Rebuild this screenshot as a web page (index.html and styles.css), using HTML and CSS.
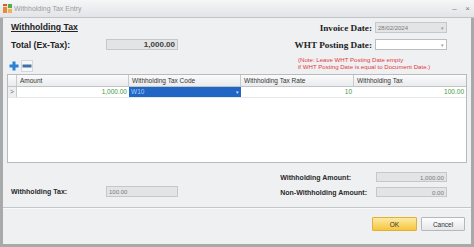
FILE: index.html
```html
<!DOCTYPE html>
<html lang="en">
<head>
  <meta charset="UTF-8">
  <title>Withholding Tax Entry</title>
  <link rel="stylesheet" href="styles.css">
</head>
<body>

  <div class="window">
    <!-- Title bar -->
    <div class="titlebar">
      <svg class="app-icon" viewBox="0 0 9 9">
        <rect x="0" y="0" width="9" height="9" fill="#f3e2c4"/>
        <rect x="0" y="3" width="4" height="6" fill="#e58a3a"/>
        <rect x="5" y="0" width="4" height="4" fill="#4cae4c"/>
        <rect x="5" y="5" width="4" height="4" fill="#f0b35a"/>
        <rect x="0" y="0" width="4" height="2" fill="#d9573a"/>
      </svg>
      <span class="title">Withholding Tax Entry</span>
      <span class="win-ctrl">&ndash;</span>
      <span class="win-ctrl">&times;</span>
    </div>

    <div class="frame">
      <div class="content">
        <div class="top">
          <div class="top-left">
            <div class="heading">Withholding Tax</div>
            <div class="field-row total-row">
              <span class="label-bold">Total (Ex-Tax):</span>
              <div class="box box-total">1,000.00</div>
            </div>
            <div class="toolbar">
              <button class="tool-btn">
                <svg viewBox="0 0 10 10" width="10" height="10">
                  <rect x="3.5" y="0.5" width="3" height="9" fill="#2b82d4"/>
                  <rect x="0.5" y="3.5" width="9" height="3" fill="#2b82d4"/>
                </svg>
              </button>
              <button class="tool-btn tool-frame">
                <svg viewBox="0 0 10 10" width="10" height="10">
                  <rect x="0.5" y="3.5" width="9" height="3" fill="#4470a6"/>
                </svg>
              </button>
            </div>
          </div>

          <div class="top-right">
            <div class="date-row">
              <span class="label-serif">Invoice Date:</span>
              <div class="box box-date">28/02/2024<span class="arrow">&#9662;</span></div>
            </div>
            <div class="date-row">
              <span class="label-serif">WHT Posting Date:</span>
              <div class="box box-date box-white"><span></span><span class="arrow">&#9662;</span></div>
            </div>
            <div class="note">(Note: Leave WHT Posting Date empty<br>if WHT Posting Date is equal to Document Date.)</div>
          </div>
        </div>

        <!-- Grid -->
        <div class="grid">
          <div class="grid-row grid-head">
            <div class="cell"></div>
            <div class="cell">Amount</div>
            <div class="cell">Withholding Tax Code</div>
            <div class="cell">Withholding Tax Rate</div>
            <div class="cell">Withholding Tax</div>
          </div>
          <div class="grid-row grid-data">
            <div class="cell cell-indicator">&gt;</div>
            <div class="cell cell-num">1,000.00</div>
            <div class="cell cell-selected">W10<span class="arrow-light">&#9662;</span></div>
            <div class="cell cell-num">10</div>
            <div class="cell cell-num">100.00</div>
          </div>
        </div>

        <!-- Summary -->
        <div class="summary">
          <div class="field-row">
            <span class="label-small">Withholding Tax:</span>
            <div class="box box-left">100.00</div>
          </div>
          <div class="summary-right">
            <span class="label-small">Withholding Amount:</span>
            <div class="box box-sum">1,000.00</div>
            <span class="label-small">Non-Withholding Amount:</span>
            <div class="box box-sum">0.00</div>
          </div>
        </div>
      </div>

      <div class="separator"></div>

      <div class="footer">
        <button class="btn btn-ok">OK</button>
        <button class="btn btn-cancel">Cancel</button>
      </div>
    </div>
  </div>

</body>
</html>
```

FILE: styles.css
```css
body {
  margin: 0;
  font-family: "Liberation Sans", Arial, sans-serif;
  background: #eff0f2;
}

.window {
  width: 474px;
  height: 247px;
  display: flex;
  flex-direction: column;
  background: #eff0f2;
}

/* Title bar */
.titlebar {
  height: 17px;
  display: flex;
  align-items: center;
  padding-left: 3px;
  background: linear-gradient(#f5f6f8, #e3e4e7);
  border-bottom: 1px solid #c3c4c7;
}

.app-icon {
  width: 9px;
  height: 9px;
  margin-right: 2px;
}

.title {
  flex: 1;
  font-size: 7px;
  color: #9a9b9d;
}

.win-ctrl {
  width: 13px;
  text-align: center;
  font-size: 8px;
  color: #7a7a7a;
}

/* Window frame */
.frame {
  flex: 1;
  display: flex;
  flex-direction: column;
  border: 3px solid #a8a9ab;
  border-top: none;
}

.content {
  padding: 0 4px;
}

.top {
  display: flex;
  justify-content: space-between;
}

.top-left {
  padding: 3px 0 0 4px;
}

.heading {
  font-size: 8.7px;
  font-weight: bold;
  line-height: 12px;
  text-decoration: underline;
  color: #222;
}

.field-row {
  display: grid;
  grid-template-columns: 95px 72px;
  align-items: center;
}

.total-row {
  margin-top: 6px;
}

.label-bold {
  font-size: 8.7px;
  font-weight: bold;
  color: #222;
}

.label-small {
  font-size: 7px;
  font-weight: bold;
  color: #2a2a2a;
}

.box {
  height: 11px;
  box-sizing: border-box;
  display: flex;
  align-items: center;
  padding: 0 2px;
  border: 1px solid #c6c7c9;
  background: #e3e4e6;
  font-size: 6px;
  color: #7a7a7a;
}

.box-total {
  justify-content: flex-end;
  font-size: 8px;
  font-weight: bold;
  color: #3c3c3c;
}

/* +/- buttons */
.toolbar {
  display: flex;
  gap: 1px;
  margin: 10px 0 0 -3px;
}

.tool-btn {
  width: 12px;
  height: 12px;
  padding: 0;
  display: flex;
  align-items: center;
  justify-content: center;
  border: 1px solid transparent;
  background: none;
}

.tool-frame {
  border-color: #d3d6da;
  background: #f6f7f9;
}

.top-right {
  width: 175px;
  margin-right: 20px;
  padding-top: 4px;
}

.date-row {
  display: grid;
  grid-template-columns: 1fr 72px;
  column-gap: 3px;
  align-items: center;
}

.date-row + .date-row {
  margin-top: 6px;
}

.label-serif {
  font-family: "Liberation Serif", serif;
  font-size: 9.2px;
  font-weight: bold;
  text-align: right;
  white-space: nowrap;
  color: #222;
}

.box-date {
  justify-content: space-between;
}

.box-white {
  background: #fff;
  border-color: #bcbdbf;
}

.arrow {
  font-size: 5px;
  color: #9a9a9a;
}

.note {
  margin-top: 6px;
  padding-left: 26px;
  font-size: 6.1px;
  line-height: 7px;
  color: #e5383d;
  white-space: nowrap;
}

/* Grid */
.grid {
  margin-top: 2px;
  height: 89px;
  box-sizing: border-box;
  border: 1px solid #b9babc;
  background: #fff;
}

.grid-row {
  display: grid;
  grid-template-columns: 9px 112px 112px 113px 1fr;
}

.grid-head {
  height: 12px;
  box-sizing: border-box;
  border-bottom: 1px solid #c2c3c5;
  background: linear-gradient(#fbfbfc, #eaebed);
}

.grid-head .cell {
  border-right: 1px solid #c9cacc;
  padding-left: 3px;
  font-size: 6.5px;
  line-height: 11px;
  color: #333;
}

.grid-head .cell:last-child {
  border-right: none;
}

.grid-data {
  height: 11px;
  box-sizing: border-box;
  border-bottom: 1px solid #e6e7e9;
}

.grid-data .cell {
  font-size: 6.5px;
  line-height: 10px;
}

.cell-indicator {
  background: #eeeff1;
  border-right: 1px solid #c9cacc;
  padding-left: 2px;
  color: #666;
}

.cell-num {
  text-align: right;
  padding-right: 2px;
  color: #3e9a3e;
}

.cell-selected {
  display: flex;
  justify-content: space-between;
  padding: 0 2px;
  background: #2166c4;
  color: #a5d0f7;
}

.arrow-light {
  font-size: 5px;
  color: #cfe3f8;
}

/* Summary */
.summary {
  display: flex;
  justify-content: space-between;
  align-items: flex-end;
  padding: 9px 20px 0 4px;
}

.box-left {
  font-size: 6px;
}

.summary-right {
  display: grid;
  grid-template-columns: auto 71px;
  column-gap: 9px;
  row-gap: 5px;
  align-items: center;
}

.box-sum {
  height: 10px;
  justify-content: flex-end;
  font-size: 6.2px;
}

.separator {
  margin-top: 10px;
  border-top: 1px solid #c5c6c8;
  border-bottom: 1px solid #fafafa;
}

/* Buttons */
.footer {
  display: flex;
  justify-content: flex-end;
  gap: 4px;
  padding: 8px 6px 0 0;
}

.btn {
  width: 45px;
  height: 14px;
  padding: 0;
  border: 1px solid;
  border-radius: 1px;
  font-family: inherit;
  font-size: 6.5px;
  color: #333;
}

.btn-ok {
  background: linear-gradient(#fdeaa2, #f6c53e);
  border-color: #e2b03a;
}

.btn-cancel {
  width: 44px;
  background: linear-gradient(#fdfdfd, #e5e7ea);
  border-color: #b4b7bb;
}
```
